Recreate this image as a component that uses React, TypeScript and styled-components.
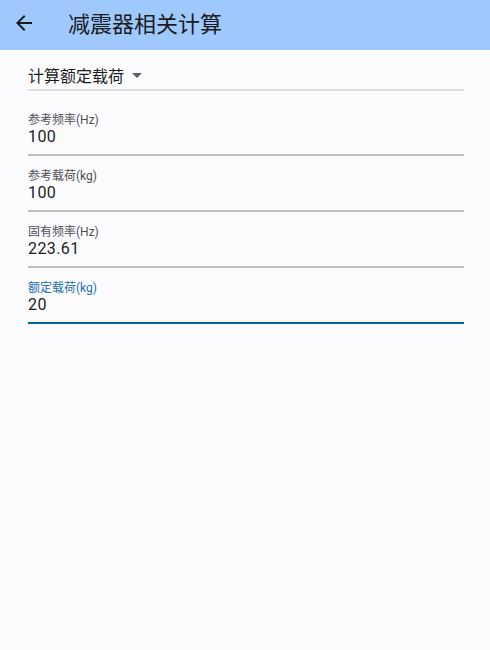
import styled, { createGlobalStyle } from "styled-components";
import { FC } from "react";

const GlobalStyle = createGlobalStyle`
    html, body {
        margin: 0;
        padding: 0;
        background: #fcfcff;
        font-family: Roboto, "Noto Sans CJK SC", sans-serif;
        color: #1a1c1e;
    }
`;

const Page = styled.div`
    width: 490px;
    min-height: 650px;
    background: #fcfcff;
`;

const AppBar = styled.header`
    height: 50px;
    background: #9fc9fd;
    display: flex;
    align-items: center;
`;

const BackButton = styled.button`
    width: 24px;
    height: 24px;
    margin-left: 12px;
    margin-top: -4px;
    padding: 0;
    border: none;
    background: none;
    display: flex;
    align-items: center;
    justify-content: center;
    color: #1a1c1e;
`;

const Title = styled.h1`
    margin: 0 0 0 32px;
    font-size: 22px;
    font-weight: 400;
    line-height: 28px;
    color: #1a1c1e;
`;

const Form = styled.main`
    padding: 15px 26px 0 28px;
    display: flex;
    flex-direction: column;
`;

const Dropdown = styled.div`
    display: flex;
    align-items: center;
    height: 24px;
    border-bottom: 2px solid #dedee2;
    font-size: 16px;
    line-height: 24px;
`;

const Caret = styled.span`
    width: 0;
    height: 0;
    margin-left: 8px;
    margin-top: -3px;
    border-left: 5px solid transparent;
    border-right: 5px solid transparent;
    border-top: 5px solid #5c5f66;
`;

const Field = styled.div<{ $active?: boolean; $first?: boolean }>`
    margin-top: ${p => (p.$first ? "21px" : "12px")};
    padding-bottom: 8px;
    border-bottom: ${p => (p.$active ? "2px solid #0061a4" : "2px solid #bdbdc4")};
    display: flex;
    flex-direction: column;
`;

const Label = styled.label<{ $active?: boolean }>`
    font-size: 12px;
    line-height: 16px;
    color: ${p => (p.$active ? "#1f6fb0" : "#4c4e54")};
`;

const Value = styled.div`
    font-size: 16px;
    line-height: 18px;
    letter-spacing: 0.4px;
    color: #1a1c1e;
`;

const fields = [
    { label: "参考频率(Hz)", value: "100" },
    { label: "参考载荷(kg)", value: "100" },
    { label: "固有频率(Hz)", value: "223.61" },
    { label: "额定载荷(kg)", value: "20", active: true },
];

const App: FC = () => {
    return (
        <Page>
            <GlobalStyle />
            <AppBar>
                <BackButton aria-label="back">
                    <svg width="24" height="24" viewBox="0 0 24 24">
                        <path d="M20 11H7.83l5.59-5.59L12 4l-8 8 8 8 1.41-1.41L7.83 13H20v-2z" fill="currentColor" />
                    </svg>
                </BackButton>
                <Title>减震器相关计算</Title>
            </AppBar>
            <Form>
                <Dropdown>
                    计算额定载荷
                    <Caret />
                </Dropdown>
                {fields.map((f, i) => (
                    <Field key={f.label} $active={f.active} $first={i === 0}>
                        <Label $active={f.active}>{f.label}</Label>
                        <Value>{f.value}</Value>
                    </Field>
                ))}
            </Form>
        </Page>
    );
};

export default App;
